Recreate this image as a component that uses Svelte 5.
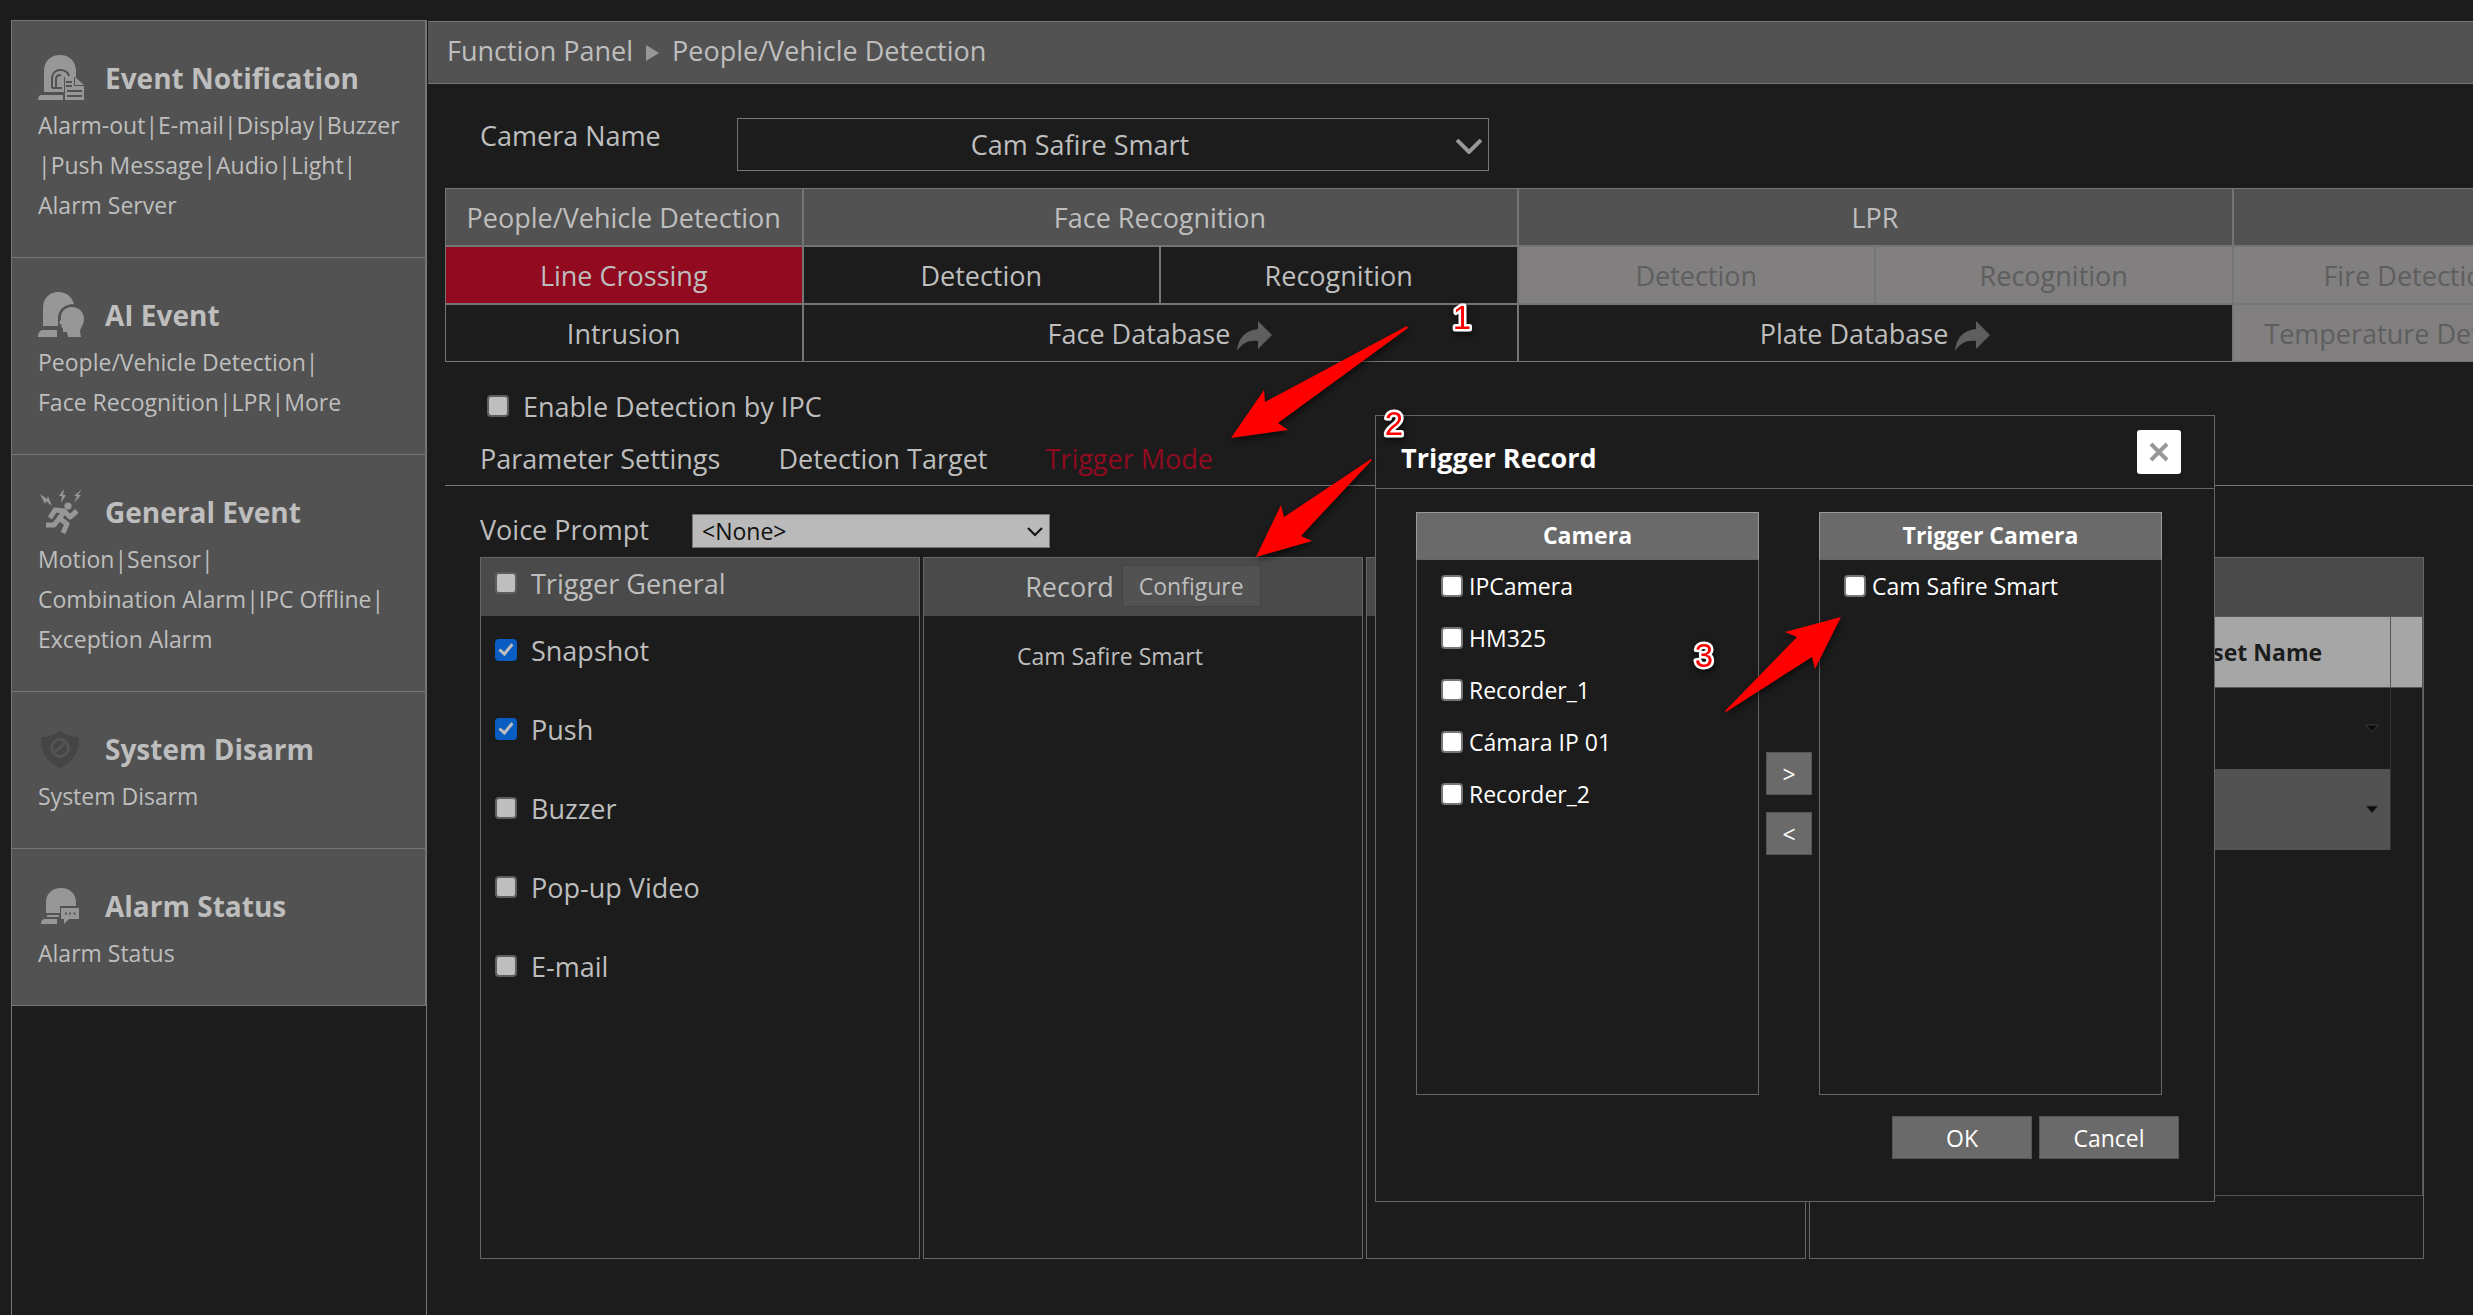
<script>
  const sections = [
    {
      icon: 'notification',
      title: 'Event Notification',
      lines: ['Alarm-out|E-mail|Display|Buzzer', '|Push Message|Audio|Light|', 'Alarm Server']
    },
    {
      icon: 'ai',
      title: 'AI Event',
      lines: ['People/Vehicle Detection|', 'Face Recognition|LPR|More']
    },
    {
      icon: 'motion',
      title: 'General Event',
      lines: ['Motion|Sensor|', 'Combination Alarm|IPC Offline|', 'Exception Alarm']
    },
    { icon: 'shield', title: 'System Disarm', lines: ['System Disarm'] },
    { icon: 'status', title: 'Alarm Status', lines: ['Alarm Status'] }
  ];

  const cameras = ['IPCamera', 'HM325', 'Recorder_1', 'Cámara IP 01', 'Recorder_2'];
  const triggerCameras = ['Cam Safire Smart'];

  let actions = $state([
    { name: 'Snapshot', on: true },
    { name: 'Push', on: true },
    { name: 'Buzzer', on: false },
    { name: 'Pop-up Video', on: false },
    { name: 'E-mail', on: false }
  ]);
</script>

{#snippet shareArrow()}
  <svg class="share" viewBox="0 0 35 30" aria-hidden="true">
    <path d="M21 0 35 14 21 28V20C12 19 5 22 0 30 1 17 9 9 21 8z" />
  </svg>
{/snippet}

{#snippet cameraList(title, items)}
  <section class="list">
    <h3>{title}</h3>
    <ul>
      {#each items as item}
        <li><label><input type="checkbox" />{item}</label></li>
      {/each}
    </ul>
  </section>
{/snippet}

<div class="page">
  <nav class="sidebar">
    {#each sections as section}
      <section class="group">
        <div class="group-title">
          <svg class="icon" viewBox="0 0 46 46" aria-hidden="true">
            {#if section.icon === 'notification'}
              <path d="M6 37V16C6 6 13 0 22 0s16 6 16 16v6H26v15z" />
              <path class="line" d="M14 33V23c0-5 4-8 8-8s8 2 9 6M14 33h10M18 33V24c0-3 2-4 5-4" />
              <path d="M4 40h21v5H0c0-3 1-5 4-5z" />
              <path d="M27 22h9v9h10v14H27z" />
              <path d="M37 22l9 8h-9z" />
              <path class="line" d="M28 27h6M28 31h6M29 36h15M29 41h15" />
            {:else if section.icon === 'ai'}
              <path d="M5 34V16C5 6 12 0 20 0c9 0 14 5 16 12-9 0-15 5-16 13v9z" />
              <path d="M4 38h15v7H0c0-3 1-6 4-7z" />
              <path d="M34 15c7 0 12 5 12 12 0 5-3 8-4 12l1 6H30l-1-5h-4v-4l-2-1 1-2-3-2 2-4c-1-7 4-12 11-12z" />
            {:else if section.icon === 'motion'}
              <path d="M2 5l7 5 1-3 4 10-6-5-1 3zM26 0l-5 7h3l-1 7 5-8h-3zM44 0l-8 7h3l-3 7 7-8h-3z" />
              <circle cx="30" cy="17" r="3.6" />
              <path class="limb" d="M12 29l5-8 9 1 6 6 7-6M26 23l-6 8-4 5H8M21 29l8 6-4 9" />
            {:else if section.icon === 'shield'}
              <path class="dark" d="M22 5c6 4 12 6 19 6 0 15-5 25-19 31C8 36 3 26 3 11c7 0 13-2 19-6z" />
              <circle class="ring" cx="22" cy="22" r="8.5" />
              <path class="ring" d="M17 26l10-9" />
            {:else}
              <path d="M8 30V19C8 11 14 5 23 5s15 6 15 14v4H22v7z" />
              <path d="M9 32h12v2H9zM6 36h13v5H3c0-3 1-4 3-5z" />
              <path d="M23 25h18v11H31l-5 5v-5h-3z" />
              <path class="dots" d="M27 30.5h2M31 30.5h2M35.500 30.5h2" />
            {/if}
          </svg>
          <h2>{section.title}</h2>
        </div>
        {#each section.lines as line}
          <div class="links">{#each line.split('|') as name, i}{#if i > 0}|{/if}{#if name}<a href="#{name}">{name}</a>{/if}{/each}</div>
        {/each}
      </section>
    {/each}
  </nav>

  <main>
    <header class="breadcrumb">
      <a href="#panel">Function Panel</a>
      <svg viewBox="0 0 13 16" aria-hidden="true"><path d="M0 0 13 8 0 16z" /></svg>
      <span>People/Vehicle Detection</span>
    </header>

    <div class="content">
      <div class="camera-row">
        <label for="camera">Camera Name</label>
        <div class="camera-select">
          <select id="camera"><option>Cam Safire Smart</option></select>
          <svg viewBox="0 0 26 15" aria-hidden="true"><path d="M1 1l12 12L25 1" /></svg>
        </div>
      </div>

      <div class="functions-wrap">
        <table class="functions">
          <thead>
            <tr>
              <th>People/Vehicle Detection</th>
              <th colspan="2">Face Recognition</th>
              <th colspan="2">LPR</th>
              <th colspan="2"></th>
            </tr>
          </thead>
          <tbody>
            <tr>
              <td class="active">Line Crossing</td>
              <td>Detection</td>
              <td>Recognition</td>
              <td class="disabled">Detection</td>
              <td class="disabled">Recognition</td>
              <td class="disabled">Fire Detection</td>
              <td class="disabled"></td>
            </tr>
            <tr>
              <td>Intrusion</td>
              <td colspan="2">Face Database {@render shareArrow()}</td>
              <td colspan="2">Plate Database {@render shareArrow()}</td>
              <td class="disabled">Temperature Detection</td>
              <td class="disabled"></td>
            </tr>
          </tbody>
        </table>
      </div>

      <label class="enable"><input type="checkbox" />Enable Detection by IPC</label>

      <div class="tabs">
        <button>Parameter Settings</button>
        <button>Detection Target</button>
        <button class="current">Trigger Mode</button>
      </div>

      <div class="voice-row">
        <label for="voice">Voice Prompt</label>
        <div class="voice-select">
          <select id="voice"><option>&lt;None&gt;</option></select>
          <svg viewBox="0 0 16 10" aria-hidden="true"><path d="M1 1l7 7 7-7" /></svg>
        </div>
      </div>

      <div class="panels">
        <section class="panel">
          <div class="panel-head left">
            <label><input type="checkbox" />Trigger General</label>
          </div>
          <ul class="actions">
            {#each actions as action}
              <li><label><input type="checkbox" bind:checked={action.on} />{action.name}</label></li>
            {/each}
          </ul>
        </section>
        <section class="panel">
          <div class="panel-head">Record <button class="configure">Configure</button></div>
          <p class="recorded">Cam Safire Smart</p>
        </section>
        <section class="panel"><div class="panel-head"></div></section>
        <section class="panel wide">
          <div class="panel-head"></div>
          <div class="preset-box">
            <table class="presets">
              <thead>
                <tr><th></th><th class="name">Preset Name</th><th class="bar"></th></tr>
              </thead>
              <tbody>
                {#each [1, 2] as row}
                  <tr>
                    <td></td>
                    <td>
                      <svg class="pick" viewBox="0 0 14 9" aria-hidden="true"><path d="M1 1h12L7 8z" /></svg>
                    </td>
                    <td class="bar"></td>
                  </tr>
                {/each}
              </tbody>
            </table>
          </div>
        </section>
      </div>
    </div>

    <div class="dialog" role="dialog" aria-labelledby="dialog-title">
      <div class="dialog-head">
        <h2 id="dialog-title">Trigger Record</h2>
        <button class="close" aria-label="Close">
          <svg viewBox="0 0 20 20" aria-hidden="true"><path d="M2 2l16 16M18 2L2 18" /></svg>
        </button>
      </div>
      <div class="dialog-body">
        <div class="lists">
          {@render cameraList('Camera', cameras)}
          <div class="movers">
            <button>&gt;</button>
            <button>&lt;</button>
          </div>
          {@render cameraList('Trigger Camera', triggerCameras)}
        </div>
        <div class="dialog-foot">
          <button>OK</button>
          <button>Cancel</button>
        </div>
      </div>

      <!-- step markers, drawn in the dialog's own pixel space -->
      <svg class="steps" width="840" height="786" aria-hidden="true">
        <path d="M-144 23l33-48 1 12L32-89l1 2L-97 8l10 7z" />
        <path d="M-119 142l25-52 3 12 87-58 1 1-71 76 11 5z" />
        <path d="M466 202l-56 15 12 5-72 74 1 1 86-55 3 12z" />
        <text x="87" y="-86">1</text>
        <text x="19" y="20">2</text>
        <text x="329" y="252">3</text>
      </svg>
    </div>
  </main>
</div>

<style>
  :global(body) {
    background: #1c1c1c;
    overflow: hidden;
  }

  .page {
    --line: #757575;
    --text: #bebebe;
    display: flex;
    gap: 1px;
    min-height: 100vh;
    box-sizing: border-box;
    padding: 20px 0 0 11px;
    background: #1c1c1c;
    color: var(--text);
    font-family: 'Open Sans', 'Noto Sans', sans-serif;
    font-size: 27px;
  }

  h2, h3, p, ul {
    margin: 0;
    padding: 0;
    list-style: none;
  }

  a {
    color: inherit;
    text-decoration: none;
  }

  button, select {
    font: inherit;
    color: inherit;
    margin: 0;
    border-radius: 0;
  }

  input[type='checkbox'] {
    appearance: none;
    flex: none;
    width: 22px;
    height: 22px;
    margin: 0;
    box-sizing: border-box;
    background: #bebebe;
    border: 2px solid #5e5e5e;
    border-radius: 4px;
  }

  input[type='checkbox']:checked {
    background: #095cc1;
    border-color: #095cc1;
  }

  input[type='checkbox']:checked::after {
    content: '';
    display: block;
    width: 5px;
    height: 11px;
    margin: 0 0 0 5px;
    border: solid #bebebe;
    border-width: 0 3px 3px 0;
    transform: rotate(40deg);
  }

  /* sidebar */
  .sidebar {
    flex: none;
    width: 416px;
    box-sizing: border-box;
    border: solid var(--line);
    border-width: 1px 1px 0 1px;
  }

  .group {
    padding: 34px 0 32px 26px;
    background: #525252;
    border-right: 1px solid var(--line);
    border-bottom: 1px solid var(--line);
  }

  .group-title {
    display: flex;
    align-items: center;
    gap: 21px;
    height: 46px;
    margin-bottom: 4px;
  }

  .group-title h2 {
    font-size: 28px;
    line-height: 46px;
  }

  .icon {
    width: 46px;
    height: 46px;
    fill: #979797;
  }

  .icon .line {
    fill: none;
    stroke: #525252;
    stroke-width: 2;
  }

  .icon .limb {
    fill: none;
    stroke: #979797;
    stroke-width: 5;
    stroke-linejoin: round;
  }

  .icon .dark {
    fill: #454545;
  }

  .icon .ring {
    fill: none;
    stroke: #545454;
    stroke-width: 3;
  }

  .icon .dots {
    stroke: #525252;
    stroke-width: 2;
  }

  .links {
    height: 40px;
    font-size: 23px;
    line-height: 40px;
    white-space: nowrap;
  }

  /* main column */
  main {
    position: relative;
    flex: 1;
    min-width: 0;
    display: flex;
    flex-direction: column;
    padding-top: 1px;
  }

  .breadcrumb {
    display: flex;
    align-items: center;
    gap: 13px;
    height: 61px;
    padding-left: 19px;
    background: #525252;
    border: solid var(--line);
    border-width: 1px 0;
    line-height: 36px;
  }

  .breadcrumb a, .breadcrumb span {
    padding-bottom: 3px;
  }

  .breadcrumb svg {
    width: 13px;
    height: 16px;
    fill: #979797;
  }

  .content {
    flex: 1;
    display: flex;
    flex-direction: column;
    padding: 34px 0 56px 17px;
  }

  .camera-row {
    display: flex;
    padding-left: 35px;
  }

  .camera-row label {
    width: 257px;
    line-height: 36px;
  }

  .camera-select, .voice-select {
    position: relative;
  }

  .camera-select select {
    appearance: none;
    width: 752px;
    height: 53px;
    padding: 0 66px 0 0;
    background: transparent;
    border: 1px solid var(--line);
    text-align-last: center;
  }

  .camera-select svg {
    position: absolute;
    right: 7px;
    top: 21px;
    width: 26px;
    height: 15px;
    fill: none;
    stroke: #979797;
    stroke-width: 4;
    pointer-events: none;
  }

  .functions-wrap {
    margin-top: 17px;
    overflow: hidden;
  }

  .functions {
    table-layout: fixed;
    width: 123.4%;
    border-spacing: 0;
    border: 0;
  }

  .functions th, .functions td {
    height: 58px;
    box-sizing: border-box;
    padding: 0;
    border: 1px solid var(--line);
    font-weight: normal;
    text-align: center;
    white-space: nowrap;
  }

  .functions th {
    background: #525252;
  }

  .functions .active {
    background: #910a20;
  }

  .functions .disabled {
    background: #827f80;
    color: #5e5e5e;
  }

  .share {
    width: 35px;
    height: 30px;
    vertical-align: middle;
    fill: #5e5e5e;
  }

  .enable {
    display: flex;
    align-items: center;
    gap: 14px;
    height: 40px;
    margin-top: 24px;
    padding-left: 42px;
  }

  .tabs {
    display: flex;
    gap: 58px;
    padding: 9px 0 0 35px;
    border-bottom: 1px solid var(--line);
  }

  .tabs button {
    height: 50px;
    padding: 0 0 3px;
    background: none;
    border: 0;
  }

  .tabs .current {
    color: #910a20;
  }

  .voice-row {
    display: flex;
    align-items: center;
    margin: 28px 0 9px;
    padding-left: 35px;
  }

  .voice-row label {
    width: 212px;
    padding-bottom: 2px;
    line-height: 32px;
  }

  .voice-select select {
    appearance: none;
    display: block;
    width: 358px;
    height: 34px;
    padding: 0 9px;
    background: #bababa;
    border: 1px solid #757575;
    color: #111;
    font-size: 23px;
    line-height: 30px;
  }

  .voice-select svg {
    position: absolute;
    right: 7px;
    top: 13px;
    width: 16px;
    height: 10px;
    fill: none;
    stroke: #111;
    stroke-width: 2;
    pointer-events: none;
  }

  /* trigger panels */
  .panels {
    flex: 1;
    display: flex;
    gap: 3px;
    margin: 0 49px 0 35px;
  }

  .panel {
    flex: 440 0 0;
    min-width: 0;
    display: flex;
    flex-direction: column;
    box-sizing: border-box;
    border: 1px solid #666;
  }

  .panel.wide {
    flex-grow: 616;
  }

  .panel-head {
    display: flex;
    align-items: center;
    justify-content: center;
    gap: 8px;
    height: 58px;
    box-sizing: border-box;
    padding-bottom: 2px;
    background: #4a4a4a;
  }

  .panel-head.left {
    justify-content: flex-start;
    padding: 0 0 8px 14px;
  }

  .panel label {
    display: flex;
    align-items: center;
    gap: 14px;
  }

  .configure {
    height: 42px;
    padding: 0 16px;
    background: #525252;
    border: 1px solid #444;
    font-size: 23px;
    line-height: 36px;
  }

  .actions {
    display: grid;
    gap: 43px;
    padding: 16px 0 0 14px;
  }

  .actions label {
    height: 36px;
  }

  .recorded {
    padding: 24px 66px 0 0;
    font-size: 23px;
    line-height: 32px;
    text-align: center;
  }

  .preset-box {
    flex: 1;
    margin-bottom: 62px;
    border: solid #555;
    border-width: 0 1px 1px 0;
  }

  .presets {
    table-layout: fixed;
    width: 100%;
    border-collapse: collapse;
  }

  .presets th {
    height: 70px;
    padding: 0;
    background: #a6a6a6;
    border: 1px solid #555;
    border-width: 1px 1px 1px 0;
    color: #1c1c1c;
    font-size: 23px;
  }

  .presets .name {
    width: 284px;
  }

  .presets .bar {
    width: 31px;
    border-right: 0;
  }

  .presets td {
    height: 81px;
    padding: 0;
    border-right: 1px solid #333;
  }

  .presets tr:nth-child(2) td:not(.bar) {
    background: #525252;
  }

  .pick {
    display: block;
    width: 14px;
    height: 9px;
    margin: 0 11px 0 auto;
    fill: #0a0a0a;
    stroke: #3a3a3a;
  }

  /* dialog */
  .dialog {
    position: absolute;
    top: 395px;
    right: 258px;
    width: 840px;
    background: #1c1c1c;
    color: #fff;
  }

  .dialog-head {
    display: flex;
    align-items: center;
    justify-content: space-between;
    height: 74px;
    box-sizing: border-box;
    padding: 0 33px 0 25px;
    border: 1px solid #666;
  }

  .dialog-head h2 {
    padding-top: 10px;
    font-size: 27px;
  }

  .close {
    display: grid;
    place-items: center;
    width: 44px;
    height: 44px;
    padding: 0;
    background: #fff;
    border: 0;
    border-radius: 3px;
  }

  .close svg {
    width: 20px;
    height: 20px;
    fill: none;
    stroke: #979797;
    stroke-width: 4;
  }

  .dialog-body {
    padding: 23px 35px 42px 40px;
    border: 1px solid #666;
    border-top: 0;
  }

  .lists {
    display: grid;
    grid-template-columns: 343px 60px 343px;
    height: 583px;
  }

  .list {
    display: flex;
    flex-direction: column;
  }

  .list h3 {
    height: 46px;
    background: #6a6a6a;
    border: 1px solid #999;
    border-bottom-color: #666;
    font-size: 23px;
    line-height: 44px;
    text-align: center;
  }

  .list ul {
    flex: 1;
    border: 1px solid #666;
    border-top: 0;
  }

  .list label {
    display: flex;
    align-items: center;
    gap: 6px;
    height: 52px;
    padding-left: 24px;
    font-size: 23px;
  }

  .list input[type='checkbox'] {
    background: #fff;
    border-color: #757575;
  }

  .movers {
    display: flex;
    flex-direction: column;
    justify-content: center;
    align-items: center;
    gap: 17px;
  }

  .movers button {
    width: 46px;
    height: 43px;
    padding: 0;
    background: #6a6a6a;
    border: 1px solid #555;
    font-size: 23px;
    line-height: 36px;
  }

  .dialog-foot {
    display: flex;
    justify-content: flex-end;
    gap: 7px;
    margin-top: 21px;
  }

  .dialog-foot button {
    width: 140px;
    height: 43px;
    padding: 0;
    background: #6a6a6a;
    border: 1px solid #555;
    font-size: 23px;
    line-height: 36px;
  }

  .steps {
    position: absolute;
    top: 0;
    left: 0;
    overflow: visible;
    pointer-events: none;
    fill: #f00;
    filter: drop-shadow(1px 3px 3px rgba(0, 0, 0, 0.6));
  }

  .steps text {
    font-family: 'Liberation Sans', sans-serif;
    font-size: 33px;
    stroke: #fff;
    stroke-width: 5;
    stroke-linejoin: round;
    paint-order: stroke;
    text-anchor: middle;
  }
</style>
